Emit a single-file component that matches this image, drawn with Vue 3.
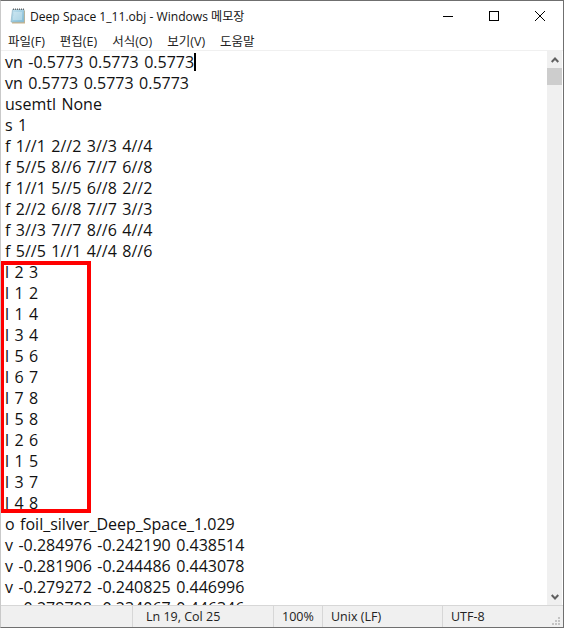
<script setup>
const lines = [
  'vn -0.5773 0.5773 0.5773',
  'vn 0.5773 0.5773 0.5773',
  'usemtl None',
  's 1',
  'f 1//1 2//2 3//3 4//4',
  'f 5//5 8//6 7//7 6//8',
  'f 1//1 5//5 6//8 2//2',
  'f 2//2 6//8 7//7 3//3',
  'f 3//3 7//7 8//6 4//4',
  'f 5//5 1//1 4//4 8//6',
  'l 2 3',
  'l 1 2',
  'l 1 4',
  'l 3 4',
  'l 5 6',
  'l 6 7',
  'l 7 8',
  'l 5 8',
  'l 2 6',
  'l 1 5',
  'l 3 7',
  'l 4 8',
  'o foil_silver_Deep_Space_1.029',
  'v -0.284976 -0.242190 0.438514',
  'v -0.281906 -0.244486 0.443078',
  'v -0.279272 -0.240825 0.446996',
  'v -0.279708 -0.234067 0.446346'
]
const menus = ['파일(F)', '편집(E)', '서식(O)', '보기(V)', '도움말']
</script>

<template>
  <div class="window">
    <header class="titlebar">
      <svg class="appicon" width="18" height="18" viewBox="0 0 18 18">
        <defs>
          <linearGradient id="pg" x1="0" y1="0" x2="1" y2="1">
            <stop offset="0" stop-color="#c4e2ef" />
            <stop offset="1" stop-color="#7fbcd6" />
          </linearGradient>
        </defs>
        <path d="M4 3.500H16V16.500H3Z" fill="#c9b48a" />
        <path d="M3.500 2.500H15V15H2Z" fill="url(#pg)" stroke="#8fb4c6" stroke-width=".7" />
        <path d="M4.500 6h8.500M4.500 8h8.500M4 10h9M4 12h9" stroke="#e4f2f8" stroke-width=".8" />
        <path d="M4 2.200h11" stroke="#666" stroke-width="1.600" stroke-dasharray="1 1" />
      </svg>
      <span class="title">Deep Space 1_11.obj - Windows 메모장</span>
      <div class="controls">
        <div class="ctl"><svg width="10" height="10" viewBox="0 0 10 10"><path d="M0 5.500h10" stroke="#000" /></svg></div>
        <div class="ctl"><svg width="10" height="10" viewBox="0 0 10 10"><rect x=".5" y=".5" width="9" height="9" fill="none" stroke="#000" /></svg></div>
        <div class="ctl"><svg width="10" height="10" viewBox="0 0 10 10"><path d="M0 0l10 10M10 0L0 10" stroke="#000" /></svg></div>
      </div>
    </header>
    <nav class="menubar">
      <span v-for="m in menus" :key="m" class="menu">{{ m }}</span>
    </nav>
    <div class="body">
      <div class="editor">
        <div v-for="(l, i) in lines" :key="i" class="line">{{ l }}<i v-if="i === 0" class="caret"></i></div>
      </div>
      <div class="scrollbar">
        <div class="arrow">
          <svg width="8" height="6" viewBox="0 0 8 6"><path d="M.7 5L4 1.500 7.300 5" fill="none" stroke="#606060" stroke-width="2" /></svg>
        </div>
        <div class="thumb"></div>
        <div class="track"></div>
        <div class="arrow">
          <svg width="8" height="6" viewBox="0 0 8 6"><path d="M.7 1L4 4.500 7.300 1" fill="none" stroke="#606060" stroke-width="2" /></svg>
        </div>
      </div>
      <div class="highlight"></div>
    </div>
    <footer class="statusbar">
      <div class="seg s0"></div>
      <div class="seg s1">Ln 19, Col 25</div>
      <div class="seg s2">100%</div>
      <div class="seg s3">Unix (LF)</div>
      <div class="seg s4">UTF-8</div>
      <svg class="grip" width="10" height="10" viewBox="0 0 10 10">
        <path d="M7 1h2v2H7zM4 4h2v2H4zM7 4h2v2H7zM1 7h2v2H1zM4 7h2v2H4zM7 7h2v2H7z" fill="#c4c4c4" />
      </svg>
    </footer>
  </div>
</template>

<style>
html, body { background: #fff; overflow: hidden; }
</style>

<style scoped>
.window {
  width: 564px;
  height: 628px;
  box-sizing: border-box;
  border-top: 1px solid #6f6f6f;
  border-right: 1px solid #6f6f6f;
  border-bottom: 1px solid #6f6f6f;
  border-left: 1px solid #c9c9c9;
  background: #fff;
  display: flex;
  flex-direction: column;
  font-family: "Open Sans", "Noto Sans CJK KR", sans-serif;
  color: #111;
  overflow: hidden;
}
.titlebar {
  height: 29px;
  flex: none;
  display: flex;
  align-items: center;
  padding-left: 8px;
}
.appicon { flex: none; }
.title {
  margin-left: 3px;
  font-size: 12.100px;
  color: #111;
}
.controls { margin-left: auto; display: flex; height: 100%; }
.ctl {
  width: 46px;
  display: flex;
  align-items: center;
  justify-content: center;
}
.menubar {
  height: 20px;
  flex: none;
  display: flex;
  align-items: center;
  padding-left: 7px;
  gap: 15px;
  border-bottom: 1px solid #f0f0f0;
  font-size: 12.500px;
  color: #222;
}
.body {
  position: relative;
  flex: 1;
  min-height: 0;
  display: flex;
}
.editor {
  flex: 1;
  min-width: 0;
  padding: 1px 0 0 4px;
  overflow: hidden;
  font-size: 16px;
  word-spacing: 1.300px;
  line-height: 21px;
  white-space: pre;
}
.line { height: 21px; }
.caret {
  display: inline-block;
  width: 2px;
  height: 18px;
  background: #000;
  vertical-align: -3px;
}
.scrollbar {
  width: 15px;
  flex: none;
  margin-right: 1px;
  background: #f0f0f0;
  display: flex;
  flex-direction: column;
}
.arrow {
  height: 17px;
  flex: none;
  display: flex;
  align-items: center;
  justify-content: center;
}
.thumb { height: 17px; flex: none; background: #cdcdcd; }
.track { flex: 1; }
.highlight {
  position: absolute;
  left: -1px;
  top: 210px;
  width: 91px;
  height: 252px;
  box-sizing: border-box;
  border: 4px solid #f00;
}
.statusbar {
  position: relative;
  height: 22px;
  flex: none;
  box-sizing: border-box;
  display: flex;
  align-items: center;
  background: #f0f0f0;
  border-top: 1px solid #d7d7d7;
  font-size: 12.500px;
  color: #222;
}
.seg {
  height: 100%;
  box-sizing: border-box;
  display: flex;
  align-items: center;
  border-left: 1px solid #d7d7d7;
  padding-left: 8px;
  white-space: nowrap;
}
.s0 { width: 131px; border-left: none; padding: 0; }
.s1 { width: 141px; padding-left: 13px; }
.s2 { width: 49px; }
.s3 { width: 120px; }
.s4 { flex: 1; }
.grip { position: absolute; right: 2px; bottom: 1px; }
</style>
